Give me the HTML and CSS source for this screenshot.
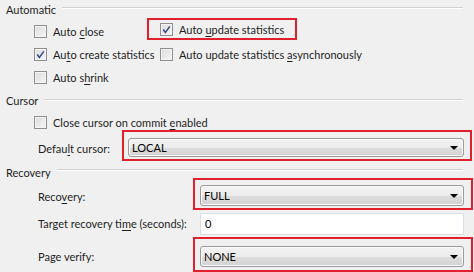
FILE: index.html
```html
<!DOCTYPE html>
<html>
<head>
<meta charset="utf-8">
<link rel="stylesheet" href="styles.css">
</head>
<body>
<div class="page">
  <div class="group-head head-auto"><span class="gtitle">Automatic</span><span class="gline"></span></div>
  <div class="checks">
    <div class="chk c1 r1"><span class="box"></span><span>Auto <u>c</u>lose</span></div>
    <div class="chk c2 r1 hl"><span class="box on"><svg viewBox="0 0 13 13" width="13" height="13"><path d="M3.2 6.6 L5.4 9.4 L9.8 3.4" fill="none" stroke="#3b4f8a" stroke-width="1.6"/></svg></span><span>Auto <u>u</u>pdate statistics</span></div>
    <div class="chk c1 r2"><span class="box on"><svg viewBox="0 0 13 13" width="13" height="13"><path d="M3.2 6.6 L5.4 9.4 L9.8 3.4" fill="none" stroke="#3b4f8a" stroke-width="1.6"/></svg></span><span>Au<u>t</u>o create statistics</span></div>
    <div class="chk c2 r2"><span class="box"></span><span>Auto update statistics <u>a</u>synchronously</span></div>
    <div class="chk c1 r3"><span class="box"></span><span>Auto s<u>h</u>rink</span></div>
  </div>

  <div class="group-head head-cursor"><span class="gtitle">Cursor</span><span class="gline"></span></div>
  <div class="chk single"><span class="box"></span><span>Close cursor on commit <u>e</u>nabled</span></div>
  <div class="frow row-cursor">
    <span class="lbl">Defau<u>l</u>t cursor:</span>
    <div class="redbox rb-cursor"><div class="combo"><span>LOCAL</span><span class="arrow"></span></div></div>
  </div>

  <div class="group-head head-rec"><span class="gtitle">Recovery</span><span class="gline"></span></div>
  <div class="frow row-rec">
    <span class="lbl">Reco<u>v</u>ery:</span>
    <div class="redbox rb-rec"><div class="combo"><span>FULL</span><span class="arrow"></span></div></div>
  </div>
  <div class="frow row-target">
    <span class="lbl">Target recovery ti<u>m</u>e (seconds):</span>
    <div class="input">0</div>
  </div>
  <div class="frow row-page">
    <span class="lbl">Page verify:</span>
    <div class="redbox rb-page"><div class="combo"><span>NONE</span><span class="arrow"></span></div></div>
  </div>
</div>
</body>
</html>
```

FILE: styles.css
```css
html, body {
  margin: 0;
  padding: 0;
  background: #f0f0f0;
}
body {
  width: 474px;
  height: 272px;
  overflow: hidden;
  font-family: Lato, "Noto Sans", sans-serif;
  font-size: 11px;
  color: #1e1e1e;
}
u {
  text-decoration: underline;
  text-underline-offset: 2px;
}
.page {
  display: flex;
  flex-direction: column;
}
.group-head {
  display: flex;
  align-items: flex-start;
  padding-left: 6px;
  padding-right: 11px;
  gap: 6px;
  box-sizing: border-box;
}
.gtitle {
  line-height: 14px;
}
.gline {
  flex: 1;
  height: 1px;
  background: #d2d2d2;
  border-bottom: 1px solid #ffffff;
}
.head-auto {
  height: 18px;
  padding-top: 3px;
}
.head-auto .gline { margin-top: 4px; }
.head-cursor {
  height: 22px;
  padding-top: 5px;
}
.head-cursor .gline { margin-top: 5px; }
.head-rec {
  height: 17px;
  padding-top: 5px;
}
.head-rec .gline { margin-top: 3px; }
.checks {
  display: grid;
  grid-template-columns: 126px 1fr;
  grid-template-rows: 23px 23px 23px;
  padding-left: 34px;
  margin-top: 2px;
}
.chk {
  display: flex;
  align-items: center;
  gap: 6px;
  white-space: nowrap;
}
.c1 { grid-column: 1; }
.c2 { grid-column: 2; }
.r1 { grid-row: 1; }
.r2 { grid-row: 2; }
.r3 { grid-row: 3; }
.hl {
  margin-left: -13px;
  padding-left: 11px;
  width: 150px;
  border: 2px solid #e0202c;
  margin-top: -2px;
  height: 22px;
  box-sizing: border-box;
}
.box {
  width: 11px;
  height: 11px;
  border: 1px solid #8f8f8f;
  background: linear-gradient(135deg, #dcdcdc, #f6f6f6);
  box-shadow: inset 0 0 0 1px #f4f4f4;
  position: relative;
  flex: none;
}
.box svg {
  position: absolute;
  left: -1px;
  top: -1px;
}
.single {
  padding-left: 34px;
  height: 22px;
}
.frow {
  display: flex;
  align-items: center;
  padding-left: 38px;
}
.lbl {
  white-space: nowrap;
}
.redbox {
  border: 2px solid #e0202c;
  box-sizing: border-box;
  display: flex;
}
.row-cursor {
  height: 31px;
  margin-top: -3px;
}
.row-cursor .lbl { width: 84px; padding-top: 5px; }
.rb-cursor {
  width: 350px;
  height: 31px;
  padding: 6px 6px 2px 4px;
}
.row-rec { height: 32px; }
.row-rec .lbl, .row-page .lbl { width: 155px; padding-top: 4px; }
.rb-rec, .rb-page {
  width: 280px;
  height: 32px;
  padding: 5px 7px 2px 5px;
}
.combo {
  flex: 1;
  display: flex;
  align-items: center;
  justify-content: space-between;
  box-sizing: border-box;
  border: 1px solid #9a9a9a;
  border-radius: 3px;
  background: linear-gradient(#f3f3f3 0%, #ebebeb 50%, #dddddd 51%, #d3d3d3 100%);
  padding: 0 5px 0 3px;
  color: #000;
  box-shadow: inset 0 0 0 1px #fbfbfb;
}
.arrow {
  width: 0;
  height: 0;
  border-left: 4px solid transparent;
  border-right: 4px solid transparent;
  border-top: 4px solid #000;
}
.row-target {
  height: 27px;
}
.row-target .lbl { width: 162px; }
.input {
  width: 264px;
  height: 22px;
  box-sizing: border-box;
  background: #fff;
  border: 1px solid #d9dde6;
  padding: 2px 4px;
  line-height: 16px;
  color: #000;
}
.row-page {
  height: 35px;
}
.rb-page { height: 35px; padding: 7px 7px 3px 5px; }
```
